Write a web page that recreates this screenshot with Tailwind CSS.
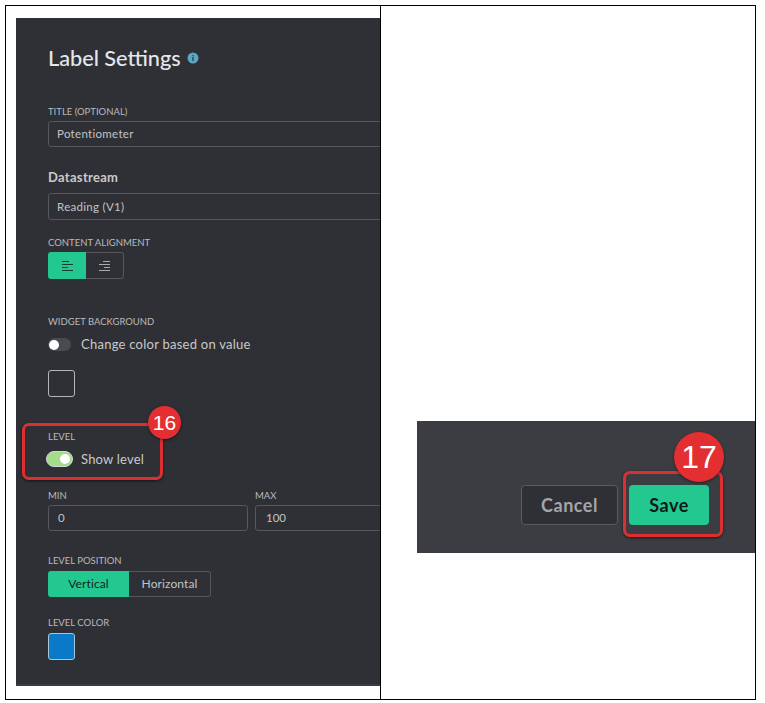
<!DOCTYPE html>
<html>
<head>
<script src="https://cdn.jsdelivr.net/npm/@tailwindcss/browser@4"></script>
</head>
<body class="bg-white font-['Lato','Noto_Sans',sans-serif]">
<div class="w-[765px] h-[703px] pt-[5px] pl-[5px]">
<div class="flex w-[751px] h-[695px] border border-black">
  <div class="relative w-[375px] h-full pl-[10px] pt-[12px] border-r border-black shrink-0">
    <div class="w-[364px] h-[668px] bg-[#2f3035] border-b-2 border-[#3a3b40] overflow-hidden pl-[32px] pt-[25px]">
      <div class="flex items-center gap-[6px] h-[30px]">
        <span class="text-[21.7px] leading-[30px] font-medium text-[#e6e7e8]">Label Settings</span>
        <svg width="12" height="12" viewBox="0 0 12 12"><circle cx="6" cy="6" r="5.5" fill="#5aa5c4"/><rect x="5.4" y="5" width="1.2" height="4" fill="#2f3035"/><rect x="5.4" y="3" width="1.2" height="1.2" fill="#2f3035"/></svg>
      </div>
      <div class="mt-[32px] h-[13px] text-[9.5px] leading-[14px] text-[#b9babc]">TITLE (OPTIONAL)</div>
      <div class="mt-[3px] w-[360px] h-[26px] border border-[#56575b] rounded-[3px] pl-[8px] text-[11.5px] leading-[24px] tracking-[0.3px] text-[#c2c3c5]">Potentiometer</div>
      <div class="mt-[23px] h-[14px] text-[13px] leading-[14px] font-bold tracking-[0.3px] text-[#c9cacc]">Datastream</div>
      <div class="mt-[9px] w-[360px] h-[27px] border border-[#56575b] rounded-[3px] pl-[8px] text-[11.5px] leading-[25px] tracking-[0.3px] text-[#c2c3c5]">Reading (V1)</div>
      <div class="mt-[16px] h-[13px] text-[9.5px] leading-[14px] text-[#b9babc]">CONTENT ALIGNMENT</div>
      <div class="mt-[3px] flex w-[76px] h-[27px]">
        <div class="w-[38px] h-full bg-[#23c890] rounded-l-[3px] flex items-center justify-center">
          <svg width="11" height="10" viewBox="0 0 11 10" stroke="#1f3a33" stroke-width="1"><path d="M0 .5h7M0 3.5h11M0 6.5h6M0 9.5h11"/></svg>
        </div>
        <div class="flex-1 h-full border border-l-0 border-[#56575b] rounded-r-[3px] flex items-center justify-center">
          <svg width="11" height="10" viewBox="0 0 11 10" stroke="#a9aaac" stroke-width="1"><path d="M4 .5h7M0 3.5h11M5 6.5h6M0 9.5h11"/></svg>
        </div>
      </div>
      <div class="mt-[36px] h-[13px] text-[9.5px] leading-[14px] text-[#b9babc]">WIDGET BACKGROUND</div>
      <div class="mt-[10px] h-[13px] flex items-center">
        <div class="w-[23px] h-[13px] rounded-full bg-[#4a4b50] pl-[1px] flex items-center"><div class="w-[10px] h-[10px] rounded-full bg-white"></div></div>
        <span class="ml-[10px] text-[13px] leading-[13px] tracking-[0.25px] text-[#c8c9cb]">Change color based on value</span>
      </div>
      <div class="mt-[19px] w-[27px] h-[27px] border border-[#b5b6b8] rounded-[3px]"></div>
      <div class="mt-[33px] h-[13px] text-[9.5px] leading-[14px] text-[#b9babc]">LEVEL</div>
      <div class="mt-[8px] h-[16px] flex items-center">
        <div class="-ml-[2px] w-[27px] h-[16px] rounded-full bg-[#a5dc8c] border border-[#d5d6d8] pr-[2px] flex items-center justify-end"><div class="w-[10px] h-[10px] rounded-full bg-white"></div></div>
        <span class="ml-[8px] text-[13px] leading-[13px] tracking-[0.2px] text-[#c8c9cb]">Show level</span>
      </div>
      <div class="mt-[22px] flex gap-[7px]">
        <div class="w-[200px] shrink-0">
          <div class="h-[13px] text-[9.5px] leading-[14px] text-[#b9babc]">MIN</div>
          <div class="mt-[3px] h-[26px] border border-[#56575b] rounded-[3px] pl-[9px] text-[11.5px] leading-[24px] text-[#c2c3c5]">0</div>
        </div>
        <div class="w-[200px] shrink-0">
          <div class="h-[13px] text-[9.5px] leading-[14px] text-[#b9babc]">MAX</div>
          <div class="mt-[3px] h-[26px] border border-[#56575b] rounded-[3px] pl-[10px] text-[11.5px] leading-[24px] text-[#c2c3c5]">100</div>
        </div>
      </div>
      <div class="mt-[23px] h-[13px] text-[9.5px] leading-[14px] text-[#b9babc]">LEVEL POSITION</div>
      <div class="mt-[4px] flex w-[163px] h-[26px] text-[12px] leading-[26px] tracking-[0.1px] text-center">
        <div class="w-[81px] h-full bg-[#23c890] rounded-l-[3px] text-[#10241e]">Vertical</div>
        <div class="flex-1 h-full border border-l-0 border-[#56575b] rounded-r-[3px] leading-[24px] text-[#c2c3c5]">Horizontal</div>
      </div>
      <div class="mt-[19px] h-[13px] text-[9.5px] leading-[14px] text-[#b9babc]">LEVEL COLOR</div>
      <div class="mt-[4px] w-[27px] h-[27px] bg-[#0a7ac8] border border-[#a9c5d8] rounded-[3px]"></div>
    </div>
    <div class="absolute left-[16px] top-[417px] w-[141px] h-[57px] border-[3px] border-[#dc2f32] rounded-[7px] shadow-[0_1px_3px_rgba(0,0,0,0.6)]"></div>
    <div class="absolute left-[142px] top-[400px] w-[33px] h-[33px] rounded-full bg-[#e32f32] text-white text-[21px] leading-[33px] text-center font-['Liberation_Sans',sans-serif] shadow-[0_1px_3px_rgba(0,0,0,0.5)]">16</div>
  </div>
  <div class="relative flex-1 h-full pt-[415px] pl-[36px]">
    <div class="h-[132px] bg-[#3c3d42] flex justify-start pt-[64px] pl-[104px] gap-[11px]">
      <div class="w-[97px] h-[40px] bg-[#2f3035] border border-[#5a5b60] rounded-[4px] text-center text-[18px] leading-[38px] font-bold tracking-[0.5px] text-[#a3a5a8]">Cancel</div>
      <div class="w-[80px] h-[40px] bg-[#23c890] rounded-[4px] text-center text-[18px] leading-[40px] font-bold tracking-[0.5px] text-[#0f1a17]">Save</div>
    </div>
    <div class="absolute left-[242px] top-[465px] w-[100px] h-[66px] border-[3px] border-[#dc2f32] rounded-[7px] shadow-[0_1px_3px_rgba(0,0,0,0.6)]"></div>
    <div class="absolute left-[293px] top-[426px] w-[50px] h-[50px] rounded-full bg-[#e32f32] text-white text-[32px] leading-[50px] text-center font-['Liberation_Sans',sans-serif] shadow-[0_1px_3px_rgba(0,0,0,0.5)]">17</div>
  </div>
</div>
</div>
</body>
</html>
